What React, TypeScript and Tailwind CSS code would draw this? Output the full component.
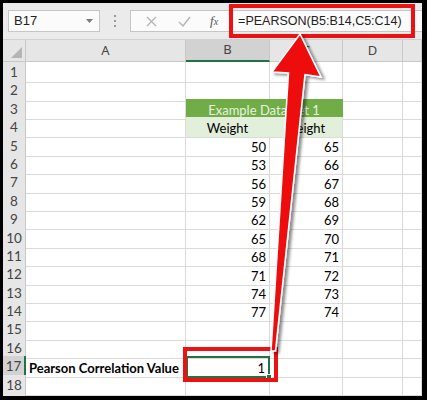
import React from "react";

const COLS = "grid-cols-[23px_160px_84px_73px_60px_1fr]";
const cellFont = { fontFamily: "Lato, 'Noto Sans', sans-serif" };

const colB = [50, 53, 56, 59, 62, 65, 68, 71, 74, 77];
const colC = [65, 66, 67, 68, 69, 70, 71, 72, 73, 74];

function RowHead({ n, active }: { n?: number; active?: boolean }) {
  return (
    <div
      className={`flex items-center justify-center border-b border-r border-[#c8c8c8] text-[13.5px] text-[#444] ${
        active ? "bg-[#d2d2d2] border-r-2 border-r-[#217346]" : "bg-[#e6e6e6]"
      }`}
    >
      {n}
    </div>
  );
}

function Cell({
  children,
  right,
  className = "",
}: {
  children?: React.ReactNode;
  right?: boolean;
  className?: string;
}) {
  return (
    <div
      className={`flex items-end overflow-visible whitespace-nowrap border-b border-r border-[#dadada] px-[3px] pb-[1px] text-[13px] leading-[16px] text-black ${
        right ? "justify-end" : ""
      } ${className}`}
    >
      {children}
    </div>
  );
}

function SheetRow({ children }: { children?: React.ReactNode }) {
  return (
    <div className={`grid h-[18.4px] shrink-0 ${COLS}`} style={cellFont}>
      {children}
    </div>
  );
}

function EmptyRow({ n }: { n?: number }) {
  return (
    <SheetRow>
      <RowHead n={n} />
      <Cell />
      <Cell />
      <Cell />
      <Cell />
      <Cell />
    </SheetRow>
  );
}

function Toolbar() {
  return (
    <div className="relative h-[37px] shrink-0 border-b border-[#d0d0d0] bg-[#ebebeb]">
      {/* name box */}
      <div className="absolute left-[5px] top-[7px] flex h-[22px] w-[92px] items-center justify-between border border-[#c6c6c6] bg-[#fbfbfb] pl-[5px] pr-[6px]">
        <span className="text-[13px] text-[#222]" style={{ fontFamily: "'Liberation Sans', sans-serif" }}>
          B17
        </span>
        <svg width="7" height="4" viewBox="0 0 7 4">
          <path d="M0 0h7L3.5 4z" fill="#7a7a7a" />
        </svg>
      </div>
      {/* splitter dots */}
      <div className="absolute left-[111px] top-[12px] flex flex-col gap-[3px]">
        <span className="h-[2px] w-[2px] bg-[#9a9a9a]" />
        <span className="h-[2px] w-[2px] bg-[#9a9a9a]" />
        <span className="h-[2px] w-[2px] bg-[#9a9a9a]" />
      </div>
      {/* formula bar */}
      <div className="absolute left-[127px] right-0 top-[7px] flex h-[22px] items-center border border-r-0 border-[#c6c6c6] bg-[#fbfbfb]">
        <svg className="ml-[15px]" width="11" height="11" viewBox="0 0 11 11">
          <path d="M1 1l9 9M10 1l-9 9" stroke="#b4b4b4" strokeWidth="1.3" />
        </svg>
        <svg className="ml-[21px]" width="13" height="11" viewBox="0 0 13 11">
          <path d="M1 6l4 4 7-9" stroke="#b4b4b4" strokeWidth="1.4" fill="none" />
        </svg>
        <span
          className="ml-[19px] text-[13px] italic text-[#555]"
          style={{ fontFamily: "'Liberation Serif', serif" }}
        >
          f<span className="text-[10px]">x</span>
        </span>
        <span
          className="ml-[20px] text-[12.5px] text-[#222]"
          style={{ fontFamily: "'Liberation Sans', sans-serif" }}
        >
          =PEARSON(B5:B14,C5:C14)
        </span>
      </div>
    </div>
  );
}

function ColumnHeader() {
  const label = "flex items-center justify-center border-b border-r border-[#c8c8c8] bg-[#e6e6e6] text-[13px] text-[#444]";
  return (
    <div className={`grid h-[22px] shrink-0 ${COLS}`} style={{ fontFamily: "'Noto Sans', sans-serif" }}>
      <div className="relative border-b border-r border-[#c8c8c8] bg-[#e6e6e6]">
        <svg className="absolute bottom-[3px] right-[3px]" width="11" height="11" viewBox="0 0 11 11">
          <path d="M11 0v11H0z" fill="#b5b5b5" />
        </svg>
      </div>
      <div className={label}>A</div>
      <div className="flex items-center justify-center border-b-2 border-r border-[#c8c8c8] border-b-[#217346] bg-[#d2d2d2] text-[13px] text-[#444]">
        B
      </div>
      <div className={label}>C</div>
      <div className={label}>D</div>
      <div className={label}></div>
    </div>
  );
}

function Arrow() {
  return (
    <svg className="pointer-events-none absolute left-0 top-0" width="427" height="400" viewBox="0 0 427 400">
      <defs>
        <filter id="arrowShadow" x="-20%" y="-20%" width="140%" height="140%">
          <feDropShadow dx="3" dy="2" stdDeviation="1.8" floodColor="#000" floodOpacity="0.45" />
        </filter>
      </defs>
      <polygon
        points="300,34 321,77 305,74.5 275.5,351 271,351 288.5,73 272,72"
        fill="#ee1111"
        stroke="#fff"
        strokeWidth="1.5"
        strokeLinejoin="miter"
        filter="url(#arrowShadow)"
      />
    </svg>
  );
}

export default function App() {
  return (
    <div className="relative h-[400px] w-[427px] overflow-hidden bg-black pb-[4px] pl-[3px] pr-[5px] pt-[3px]">
      <div className="flex h-full w-full flex-col overflow-hidden bg-white">
        <Toolbar />
        <ColumnHeader />
        <EmptyRow n={1} />
        <EmptyRow n={2} />
        <SheetRow>
          <RowHead n={3} />
          <Cell />
          <div className="col-span-2 flex items-end justify-center border-b border-r border-[#70ad47] bg-[#70ad47] pb-[1px] text-[13px] leading-[16px] text-[#e8f2e0]">
            Example Data Set 1
          </div>
          <Cell />
          <Cell />
        </SheetRow>
        <SheetRow>
          <RowHead n={4} />
          <Cell />
          <Cell className="justify-center border-[#e2efda] bg-[#e2efda] border-b-[#dadada]">Weight</Cell>
          <Cell className="justify-center border-r-[#dadada] bg-[#e2efda]">Height</Cell>
          <Cell />
          <Cell />
        </SheetRow>
        {colB.map((b, i) => (
          <SheetRow key={i}>
            <RowHead n={i + 5} />
            <Cell />
            <Cell right>{b}</Cell>
            <Cell right>{colC[i]}</Cell>
            <Cell />
            <Cell />
          </SheetRow>
        ))}
        <EmptyRow n={15} />
        <EmptyRow n={16} />
        <SheetRow>
          <RowHead n={17} active />
          <Cell className="font-bold">Pearson Correlation Value</Cell>
          <div className="relative flex items-end justify-end border-2 border-[#217346] pr-[3px] text-[13px] leading-[15px]">
            1
            <span className="absolute -bottom-[4px] -right-[4px] h-[6px] w-[6px] border border-white bg-[#217346]" />
          </div>
          <Cell />
          <Cell />
          <Cell />
        </SheetRow>
        <EmptyRow n={18} />
        {/* sliver of the next row below the fold */}
        <EmptyRow />
      </div>
      {/* callout boxes */}
      <div className="absolute left-[229px] top-[4px] h-[34px] w-[186px] border-4 border-[#ee1111]" />
      <div className="absolute left-[183px] top-[347px] h-[35px] w-[95px] border-4 border-[#ee1111]" />
      <Arrow />
    </div>
  );
}
